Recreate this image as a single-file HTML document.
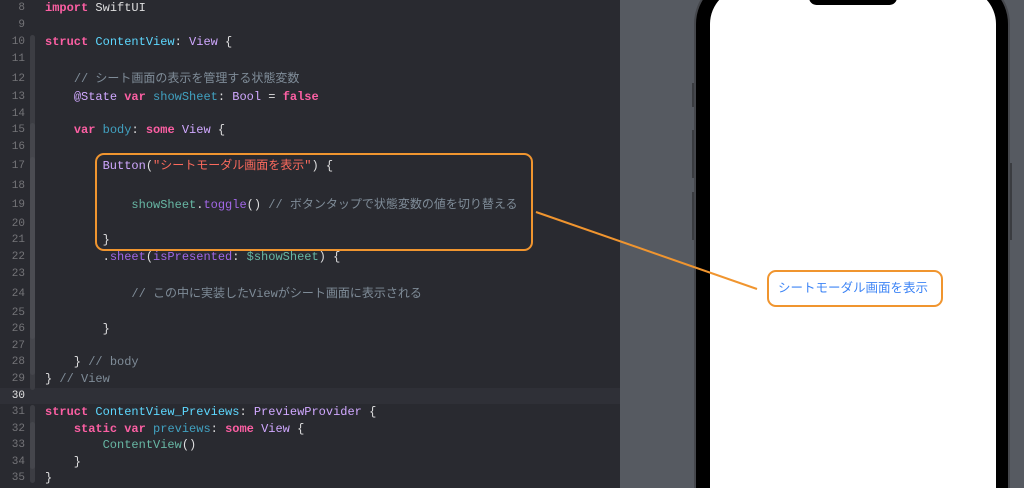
<!DOCTYPE html>
<html><head><meta charset="utf-8"><style>
html,body{margin:0;padding:0;width:1024px;height:488px;overflow:hidden}
#w{position:relative;width:1024px;height:488px;overflow:hidden;background:#565a61;font-family:"Liberation Mono","Noto Sans CJK JP",monospace}
#ed{position:absolute;left:0;top:0;width:620px;height:488px;background:#292a30}
.hl{position:absolute;left:0;top:388px;width:620px;height:16px;background:#2f3037}
.n{position:absolute;left:0;width:25px;text-align:right;font-size:11px;color:#747478;line-height:14px}
.c{position:absolute;left:45px;font-size:12px;color:#dfdfe0;white-space:pre;line-height:14px}
.k{color:#fc5fa3;font-weight:bold}.t{color:#5dd8ff}.v{color:#d0a8ff}.d{color:#41a1c0}.u{color:#67b7a4}.f{color:#a167e6}.m{color:#7f8c98}.s{color:#fc6a5d}
.g{position:absolute;left:30px;width:5px;background:#3c3d43;border-radius:3px}
.ph{position:absolute}
</style></head><body><div id="w">
<div id="ed"></div>
<div class="hl"></div>
<div class="g" style="top:35px;height:355px"></div>
<div class="g" style="top:123px;height:252px;background:#45464c"></div>
<div class="g" style="top:157px;height:182px;background:#4b4c52"></div>
<div class="g" style="top:405px;height:78px"></div>
<div class="g" style="top:422px;height:47px;background:#45464c"></div>

<div class="n" style="top:1px">8</div><div class="c" style="top:1px"><span class="k">import</span> SwiftUI</div>
<div class="n" style="top:18px">9</div>
<div class="n" style="top:35px">10</div><div class="c" style="top:35px"><span class="k">struct</span> <span class="t">ContentView</span>: <span class="v">View</span> {</div>
<div class="n" style="top:52px">11</div>
<div class="n" style="top:72px">12</div><div class="c" style="top:72px">    <span class="m">// シート画面の表示を管理する状態変数</span></div>
<div class="n" style="top:90px">13</div><div class="c" style="top:90px">    <span class="v">@State</span> <span class="k">var</span> <span class="d">showSheet</span>: <span class="v">Bool</span> = <span class="k">false</span></div>
<div class="n" style="top:107px">14</div>
<div class="n" style="top:123px">15</div><div class="c" style="top:123px">    <span class="k">var</span> <span class="d">body</span>: <span class="k">some</span> <span class="v">View</span> {</div>
<div class="n" style="top:140px">16</div>
<div class="n" style="top:159px">17</div><div class="c" style="top:159px">        <span class="v">Button</span>(<span class="s">"シートモーダル画面を表示"</span>) {</div>
<div class="n" style="top:179px">18</div>
<div class="n" style="top:198px">19</div><div class="c" style="top:198px">            <span class="u">showSheet</span>.<span class="f">toggle</span>() <span class="m">// ボタンタップで状態変数の値を切り替える</span></div>
<div class="n" style="top:217px">20</div>
<div class="n" style="top:233px">21</div><div class="c" style="top:233px">        }</div>
<div class="n" style="top:250px">22</div><div class="c" style="top:250px">        .<span class="f">sheet</span>(<span class="f">isPresented</span>: <span class="u">$showSheet</span>) {</div>
<div class="n" style="top:267px">23</div>
<div class="n" style="top:287px">24</div><div class="c" style="top:287px">            <span class="m">// この中に実装したViewがシート画面に表示される</span></div>
<div class="n" style="top:306px">25</div>
<div class="n" style="top:322px">26</div><div class="c" style="top:322px">        }</div>
<div class="n" style="top:339px">27</div>
<div class="n" style="top:355px">28</div><div class="c" style="top:355px">    } <span class="m">// body</span></div>
<div class="n" style="top:372px">29</div><div class="c" style="top:372px">} <span class="m">// View</span></div>
<div class="n" style="top:389px;color:#e0e0e0">30</div>
<div class="n" style="top:405px">31</div><div class="c" style="top:405px"><span class="k">struct</span> <span class="t">ContentView_Previews</span>: <span class="v">PreviewProvider</span> {</div>
<div class="n" style="top:422px">32</div><div class="c" style="top:422px">    <span class="k">static</span> <span class="k">var</span> <span class="d">previews</span>: <span class="k">some</span> <span class="v">View</span> {</div>
<div class="n" style="top:438px">33</div><div class="c" style="top:438px">        <span class="u">ContentView</span>()</div>
<div class="n" style="top:455px">34</div><div class="c" style="top:455px">    }</div>
<div class="n" style="top:471px">35</div><div class="c" style="top:471px">}</div>

<div class="ph" style="left:692px;top:83px;width:3px;height:24px;background:#3a3c40"></div>
<div class="ph" style="left:692px;top:130px;width:3px;height:48px;background:#3a3c40"></div>
<div class="ph" style="left:692px;top:192px;width:3px;height:48px;background:#3a3c40"></div>
<div class="ph" style="left:1009px;top:163px;width:3px;height:77px;background:#3a3c40"></div>
<div class="ph" style="left:696px;top:-22px;width:312px;height:510px;background:#000;border-radius:46px 46px 0 0;box-shadow:0 0 0 2px #45474c"></div>
<div class="ph" style="left:710px;top:-12px;width:286px;height:500px;background:#fff;border-radius:36px 36px 0 0"></div>
<div class="ph" style="left:809px;top:-10px;width:88px;height:15px;background:#000;border-radius:8px"></div>

<div class="ph" style="left:95px;top:153px;width:434px;height:94px;border:2px solid #f0952f;border-radius:9px"></div>
<svg class="ph" style="left:0;top:0" width="1024" height="488"><line x1="536" y1="212" x2="757" y2="289" stroke="#f0952f" stroke-width="2"/></svg>
<div class="ph" style="left:767px;top:270px;width:172px;height:33px;border:2px solid #f0952f;border-radius:9px;background:#fff;font-family:'Liberation Sans','Noto Sans CJK JP',sans-serif;font-size:12.5px;color:#3d84f5;line-height:33px;text-indent:9px">シートモーダル画面を表示</div>
</div></body></html>
